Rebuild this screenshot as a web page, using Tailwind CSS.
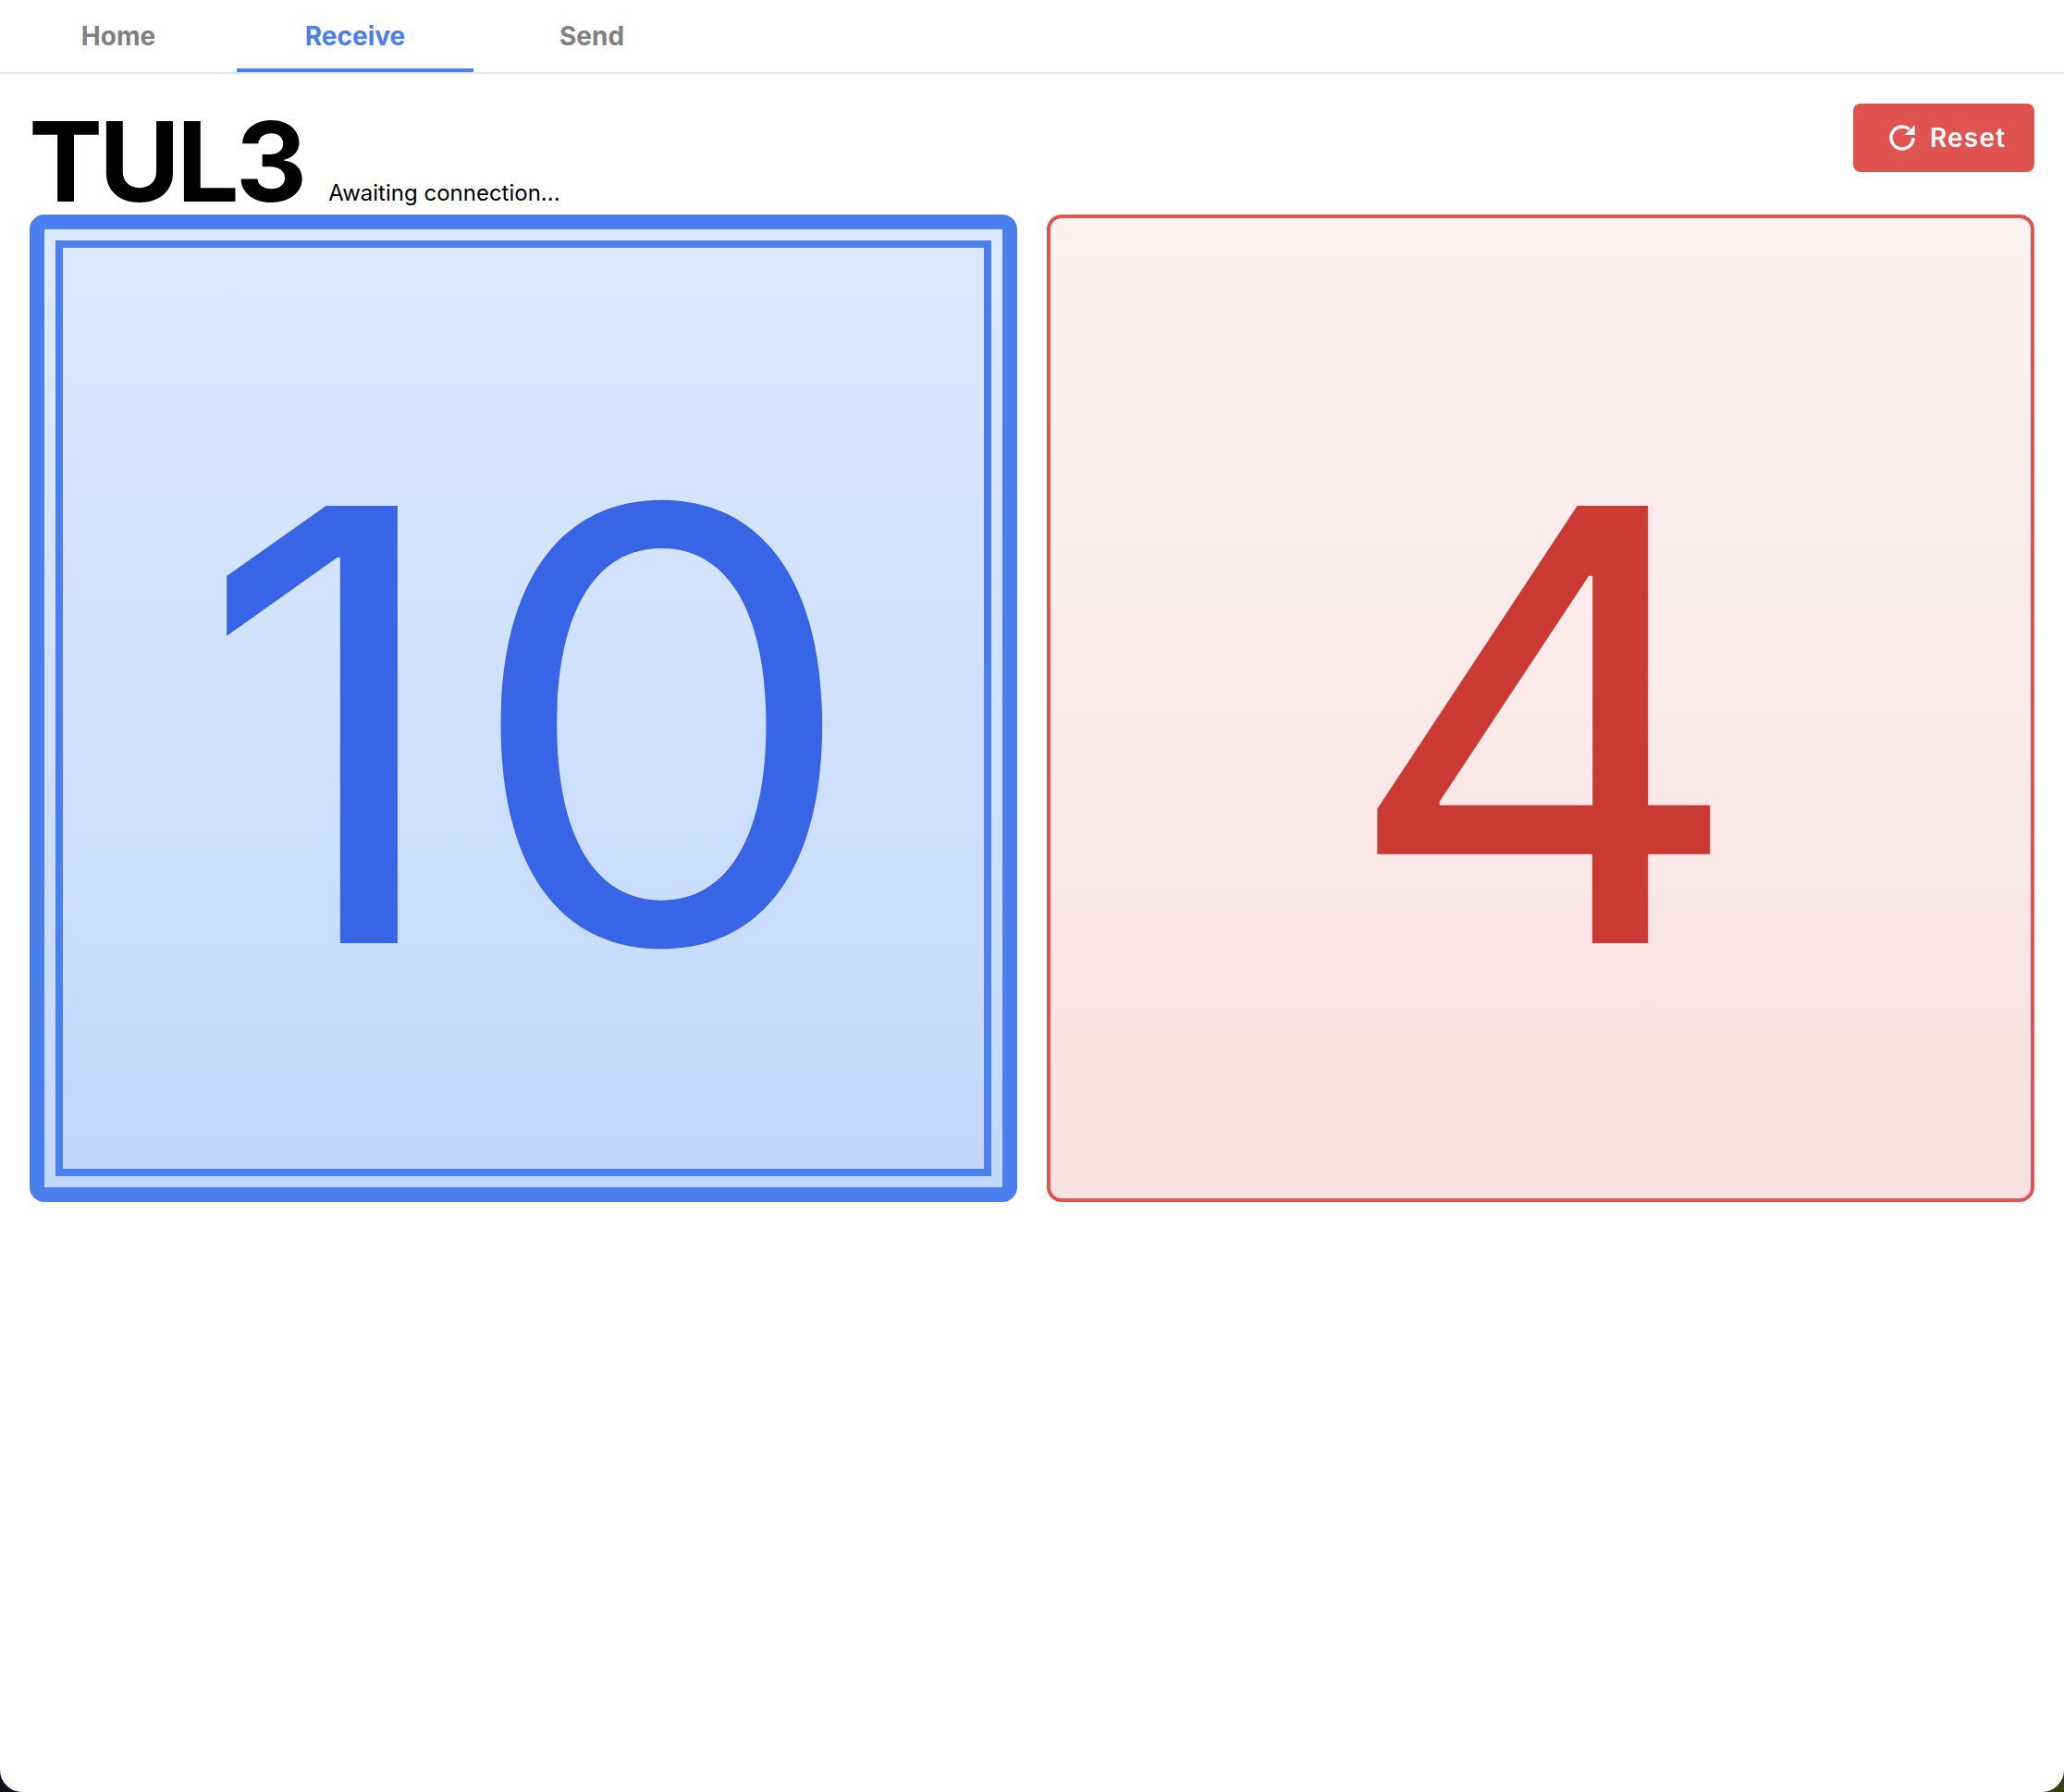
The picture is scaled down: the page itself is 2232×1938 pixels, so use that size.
<!doctype html>
<html>
<head>
<meta charset="utf-8">
<script src="https://cdn.jsdelivr.net/npm/@tailwindcss/browser@4"></script>
</head>
<body class="bg-linear-to-r from-[#10121c] to-[#3b3b10] font-[Inter,sans-serif]">
<div class="h-[1938px] w-[2232px] bg-white rounded-b-[24px] overflow-hidden">
  <nav class="flex h-[80px] border-b-2 border-[#e5e7eb]">
    <a class="w-[256px] h-[78px] flex items-center justify-center text-[28px] font-[650] text-[#808080]">Home</a>
    <a class="w-[256px] h-[78px] flex items-center justify-center text-[28px] font-[650] text-[#4c7fee] border-y-4 border-t-transparent border-b-[#4c7fee]">Receive</a>
    <a class="w-[256px] h-[78px] flex items-center justify-center text-[28px] font-[650] text-[#808080]">Send</a>
  </nav>
  <main class="px-[32px] pt-[32px]">
    <header class="flex justify-between items-start h-[120px]">
      <div class="flex items-baseline gap-[27px] pt-[3px] -ml-[1px]">
        <h1 class="text-[120px] leading-[120px] font-bold tracking-[-4px] text-black">TUL3</h1>
        <p class="text-[24px] text-black -translate-y-[1px]">Awaiting connection...</p>
      </div>
      <button class="w-[196px] h-[74px] rounded-[8px] bg-[#df5350] text-white flex items-center justify-start pl-[37px] gap-[14px] text-[28px] font-semibold tracking-[1.2px]">
        <svg width="32" height="32" viewBox="0 0 32 32"><path d="M23.7 6.8A12 12 0 1 0 28 16" fill="none" stroke="white" stroke-width="3.4"/><path d="M29.7 2.3V13H18.3z" fill="white"/></svg>
        Reset
      </button>
    </header>
    <section class="grid grid-cols-2 gap-[32px]">
      <div class="h-[1068px] rounded-[16px] border-[16px] border-[#4c7fee] bg-linear-to-b from-[#dce9fd] to-[#c2d8fb] p-[12px]">
        <div class="h-full border-[8px] border-[#4c7fee] flex items-center justify-center pt-[35px] pl-[22px] text-[650px] leading-none text-[#3865e6]"><span class="inline-block scale-x-[1.045] tracking-[11px]">10</span></div>
      </div>
      <div class="h-[1068px] rounded-[16px] border-[4px] border-[#df5350] bg-linear-to-b from-[#fcf2f2] to-[#f8e1e1] flex items-center justify-center pt-[35px] pl-[6px] text-[650px] leading-none text-[#cb3a32]"><span class="inline-block scale-x-[1.045]">4</span></div>
    </section>
  </main>
</div>
</body>
</html>
